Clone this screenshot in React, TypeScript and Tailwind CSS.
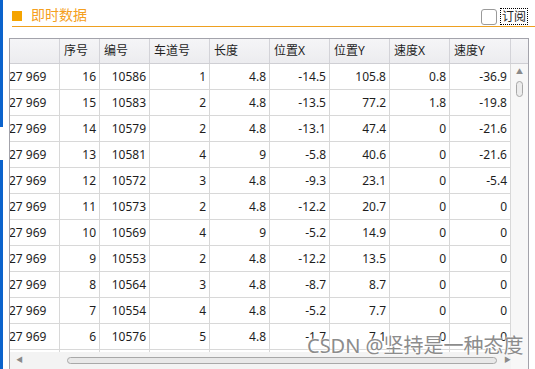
const rows = [
  [16, 10586, 1, 4.8, -14.5, 105.8, 0.8, -36.9],
  [15, 10583, 2, 4.8, -13.5, 77.2, 1.8, -19.8],
  [14, 10579, 2, 4.8, -13.1, 47.4, 0, -21.6],
  [13, 10581, 4, 9, -5.8, 40.6, 0, -21.6],
  [12, 10572, 3, 4.8, -9.3, 23.1, 0, -5.4],
  [11, 10573, 2, 4.8, -12.2, 20.7, 0, 0],
  [10, 10569, 4, 9, -5.2, 14.9, 0, 0],
  [9, 10553, 2, 4.8, -12.2, 13.5, 0, 0],
  [8, 10564, 3, 4.8, -8.7, 8.7, 0, 0],
  [7, 10554, 4, 4.8, -5.2, 7.7, 0, 0],
  [6, 10576, 5, 4.8, -1.7, 7.1, 0, 0],
];

const columns = [
  { title: "序号", w: "w-[40px]" },
  { title: "编号", w: "w-[50px]" },
  { title: "车道号", w: "w-[60px]" },
  { title: "长度", w: "w-[60px]" },
  { title: "位置X", w: "w-[60px]" },
  { title: "位置Y", w: "w-[60px]" },
  { title: "速度X", w: "w-[60px]" },
  { title: "速度Y", w: "w-[61px]" },
];

const font = { fontFamily: '"Noto Sans", "Noto Sans CJK SC", sans-serif' };

export default function App() {
  return (
    <div className="relative flex w-[535px] h-[369px] overflow-hidden bg-white text-[#1e1e1e]" style={font}>
      {/* window edge */}
      <div className="flex flex-col w-[3px] shrink-0">
        <div className="h-[127px] bg-[#0b63cc]" />
        <div className="h-[33px]" />
        <div className="flex-1 bg-[#0b63cc]" />
      </div>

      <div className="flex flex-col flex-1 min-w-0">
        {/* panel header */}
        <div className="ml-[9px] h-[27px] flex items-start border-b border-[#eea020]">
          <div className="mt-[11px] w-[10px] h-[10px] bg-[#f5a400]" />
          <span className="ml-[9px] mt-[6px] text-[14px] leading-[18px] text-[#f5a020]">即时数据</span>
          <div className="ml-auto mr-[7px] mt-[8px] flex items-center">
            <div className="w-[16px] h-[16px] rounded-[3px] border border-[#9a9a9a] bg-white" />
            <span className="ml-[3px] px-[1px] text-[12px] leading-[15px] border border-dotted border-black">订阅</span>
          </div>
        </div>

        {/* grid */}
        <div className="ml-[6px] mt-[11px] w-[520px] flex-1 flex flex-col border-l border-r border-t border-[#a3a3ab] overflow-hidden">
          <div className="flex h-[25px] shrink-0 border-b border-[#cfcfd4] bg-gradient-to-b from-[#f5f5f7] to-[#ececef] text-[12px]">
            <div className="w-[50px] border-r border-[#d3d3d8]" />
            {columns.map((c) => (
              <div key={c.title} className={`${c.w} border-r border-[#d3d3d8] pl-[4px] flex items-center`}>
                {c.title}
              </div>
            ))}
            <div className="flex-1" />
          </div>

          <div className="flex flex-1 min-h-0">
            <div className="flex flex-col w-[501px]">
              <div className="flex-1 overflow-hidden text-[12px]">
                {[...rows, null].map((r, i) => (
                  <div key={i} className="flex h-[26px] border-b border-[#d8d8d8]">
                    <div className="w-[50px] border-r border-[#d8d8d8] overflow-hidden flex items-center">
                      {r && <span className="ml-[-1px] whitespace-nowrap">27 969</span>}
                    </div>
                    {columns.map((c, j) => (
                      <div key={c.title} className={`${c.w} border-r border-[#d8d8d8] pr-[3px] flex items-center justify-end`}>
                        {r ? r[j] : ""}
                      </div>
                    ))}
                  </div>
                ))}
              </div>
              {/* horizontal scrollbar */}
              <div className="h-[17px] shrink-0 bg-[#f3f3f3] flex items-center">
                <span className="ml-[6px] text-[7px] text-[#8a8a8a]">◀</span>
                <div className="ml-[44px] w-[430px] h-[7px] rounded-full border border-[#a8a8a8] bg-[#e8e8e8]" />
                <span className="ml-[7px] text-[7px] text-[#8a8a8a]">▶</span>
              </div>
            </div>
            {/* vertical scrollbar */}
            <div className="flex-1 bg-[#f7f7f7] flex flex-col items-center">
              <span className="mt-[4px] text-[7px] leading-[8px] text-[#8a8a8a]">▲</span>
              <div className="mt-[5px] w-[7px] h-[16px] rounded-full border border-[#a8a8a8] bg-[#ececec]" />
            </div>
          </div>
        </div>
      </div>

      {/* watermark */}
      <div
        className="absolute left-[307px] top-[334px] text-[20px] leading-[24px] text-[#8c8c8c] whitespace-nowrap"
        style={{ textShadow: "0 0 2px #fff, 0 0 2px #fff" }}
      >
        CSDN @坚持是一种态度
      </div>
    </div>
  );
}
